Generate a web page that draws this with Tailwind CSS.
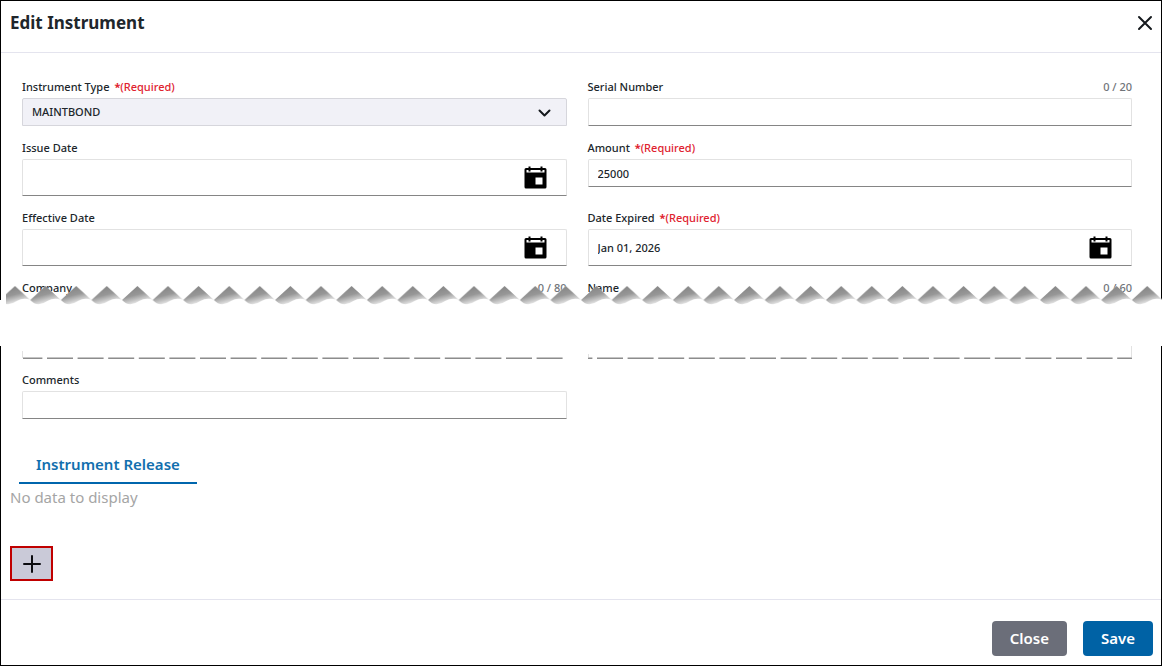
<!DOCTYPE html>
<html lang="en">
<head>
    <meta charset="UTF-8">
    <meta name="viewport" content="width=device-width, initial-scale=1.0">
    <title>Edit Instrument</title>
    <script src="https://cdn.jsdelivr.net/npm/@tailwindcss/browser@4"></script>
</head>
<body class="bg-white font-['Noto_Sans',sans-serif] text-[#20262b]">
    <div class="relative flex min-h-screen flex-col border border-black">
        <!-- Header -->
        <header class="flex h-[52px] items-center justify-between border-b border-[#e4e4ee] pr-2 pl-[9px] pb-[7px]">
            <h1 class="text-[17px] font-bold">Edit Instrument</h1>
            <button type="button" aria-label="Close dialog">
                <svg class="size-4" viewBox="0 0 16 16" fill="none" stroke="#15191d" stroke-width="2" stroke-linecap="round"><path d="M2 2l12 12M14 2L2 14"/></svg>
            </button>
        </header>

        <!-- Form -->
        <main class="grow">
            <form class="grid grid-cols-2 gap-x-[21px] pt-[26px] pr-[29px] pl-[21px] text-[11px] leading-4 font-medium">
                <div class="h-[61px]">
                    <label for="type" class="block">Instrument Type <span class="ml-[2px] text-[#e0222f]"><b>*</b>(Required)</span></label>
                    <div class="relative mt-[3px]">
                        <select id="type" class="h-7 w-full appearance-none rounded-t-xs border border-[#d6d6dc] bg-[#f1f1f7] px-[9px]">
                            <option>MAINTBOND</option>
                        </select>
                        <svg class="pointer-events-none absolute top-[9px] right-[15px] h-3 w-[14px]" viewBox="0 0 14 12" fill="none" stroke="#15191d" stroke-width="2" stroke-linecap="round" stroke-linejoin="round"><path d="M1.500 3.500l5 5 5-5"/></svg>
                    </div>
                </div>
                <div class="h-[61px]">
                    <div class="flex justify-between"><label for="serial">Serial Number</label><span class="text-[#707479]">0 / 20</span></div>
                    <input id="serial" type="text" class="mt-[3px] block h-7 w-full rounded-t-xs border border-[#e2e2e2] border-b-[#858585] px-[9px]">
                </div>

                <div class="h-[70px]">
                    <label for="issue" class="block">Issue Date</label>
                    <div class="relative mt-[3px]">
                        <input id="issue" type="text" class="block h-[37px] w-full rounded-t-xs border border-[#e2e2e2] border-b-[#858585] px-[9px]">
                        <button type="button" aria-label="Pick issue date" class="absolute top-[7px] right-5">
                            <svg class="h-6 w-[23px]" viewBox="0 0 23 24"><path d="M2 2h2.500V.5h2V2h10V.5h2V2h2.500q1.500 0 1.500 1.500V21q0 1.500-1.500 1.500H2Q.5 22.500.5 21V3.500Q.5 2 2 2zM2.500 4v2.500h18V4h-2v1.500h-2V4h-10v1.500h-2V4zM11.500 11.500v7h7v-7z" fill-rule="evenodd"/></svg>
                        </button>
                    </div>
                </div>
                <div class="h-[70px]">
                    <label for="amount" class="block">Amount <span class="ml-[2px] text-[#e0222f]"><b>*</b>(Required)</span></label>
                    <input id="amount" type="text" value="25000" class="mt-[3px] block h-7 w-full rounded-t-xs border border-[#e2e2e2] border-b-[#858585] px-[9px]">
                </div>

                <div class="h-[70px]">
                    <label for="effective" class="block">Effective Date</label>
                    <div class="relative mt-[3px]">
                        <input id="effective" type="text" class="block h-[37px] w-full rounded-t-xs border border-[#e2e2e2] border-b-[#858585] px-[9px]">
                        <button type="button" aria-label="Pick effective date" class="absolute top-[7px] right-5">
                            <svg class="h-6 w-[23px]" viewBox="0 0 23 24"><path d="M2 2h2.500V.5h2V2h10V.5h2V2h2.500q1.500 0 1.500 1.500V21q0 1.500-1.500 1.500H2Q.5 22.500.5 21V3.500Q.5 2 2 2zM2.500 4v2.500h18V4h-2v1.500h-2V4h-10v1.500h-2V4zM11.500 11.500v7h7v-7z" fill-rule="evenodd"/></svg>
                        </button>
                    </div>
                </div>
                <div class="h-[70px]">
                    <label for="expired" class="block">Date Expired <span class="ml-[2px] text-[#e0222f]"><b>*</b>(Required)</span></label>
                    <div class="relative mt-[3px]">
                        <input id="expired" type="text" value="Jan 01, 2026" class="block h-[37px] w-full rounded-t-xs border border-[#e2e2e2] border-b-[#858585] px-[9px]">
                        <button type="button" aria-label="Pick expiry date" class="absolute top-[7px] right-5">
                            <svg class="h-6 w-[23px]" viewBox="0 0 23 24"><path d="M2 2h2.500V.5h2V2h10V.5h2V2h2.500q1.500 0 1.500 1.500V21q0 1.500-1.500 1.500H2Q.5 22.500.5 21V3.500Q.5 2 2 2zM2.500 4v2.500h18V4h-2v1.500h-2V4h-10v1.500h-2V4zM11.500 11.500v7h7v-7z" fill-rule="evenodd"/></svg>
                        </button>
                    </div>
                </div>

                <div class="flex h-[92px] justify-between"><span>Company</span><span class="text-[#707479]">0 / 80</span></div>
                <div class="flex h-[92px] justify-between"><span>Name</span><span class="text-[#707479]">0 / 60</span></div>

                <div>
                    <label for="comments" class="block">Comments</label>
                    <input id="comments" type="text" class="mt-[3px] block h-7 w-full rounded-t-xs border border-[#e2e2e2] border-b-[#858585] px-[9px]">
                </div>
            </form>

            <!-- Page tear -->
            <svg class="absolute -left-px top-[283px] h-[76px] w-[calc(100%+2px)]" viewBox="0 0 1162 76" preserveAspectRatio="none">
                <defs>
                    <linearGradient id="fade" gradientUnits="userSpaceOnUse" x1="13" y1="2" x2="18" y2="21">
                        <stop offset="0" stop-color="#858585"/>
                        <stop offset="0.450" stop-color="#979797"/>
                        <stop offset="1" stop-color="#fff"/>
                    </linearGradient>
                    <pattern id="teeth" x="-0.300" width="30.600" height="30" patternUnits="userSpaceOnUse">
                        <path d="M0 16L15.300 2 30.600 16V30H0z" fill="#fff"/>
                        <path d="M0 16L15.300 2 30.600 16Q24 13 17 17Q7 24 0 16z" fill="url(#fade)"/>
                    </pattern>
                </defs>
                <path d="M0 16h1162v46H0z" fill="#fff"/>
                <path d="M6 0h1156v30H6z" fill="url(#teeth)"/>
                <path d="M22.500 67v7M588.500 70v4M1131.500 62v12" stroke="#e2e2e2"/>
                <path d="M23 73.500h540" stroke="#c4c4c4" stroke-dasharray="26 4.600" stroke-dashoffset="6.600"/>
                <path d="M23 74.500h540" stroke="#8c8c8c" stroke-dasharray="26 4.600" stroke-dashoffset="6.600"/>
                <path d="M588 73.500h544" stroke="#c4c4c4" stroke-dasharray="26 4.600" stroke-dashoffset="21.600"/>
                <path d="M588 74.500h544" stroke="#8c8c8c" stroke-dasharray="26 4.600" stroke-dashoffset="21.600"/>
            </svg>

            <!-- Release tab -->
            <div role="tablist" class="mt-[27px] ml-[18px] flex">
                <button type="button" role="tab" aria-selected="true" class="h-[38px] border-b-2 border-[#0066ad] px-[17px] text-[15px] font-semibold text-[#126fae]">Instrument Release</button>
            </div>
            <p class="mt-px ml-[9px] text-[15px] leading-6 text-[#a5a5a5]">No data to display</p>
            <button type="button" aria-label="Add release" class="mt-[37px] mb-[18px] ml-[9px] flex h-[35px] w-[43px] items-center justify-center border-2 border-[#c00000] bg-[#cacad8]">
                <svg class="size-[18px]" viewBox="0 0 18 18" stroke="#0c0c10" stroke-width="2" stroke-linecap="round"><path d="M9 1v16M1 9h16"/></svg>
            </button>
        </main>

        <!-- Actions -->
        <footer class="flex justify-end gap-4 border-t border-[#e4e4ee] pt-[21px] pr-2 pb-[9px] text-[15px] font-semibold text-white">
            <button type="button" class="h-[35px] rounded bg-[#6b6e79] px-[18px]">Close</button>
            <button type="button" class="h-[35px] rounded bg-[#0062a5] px-[18px]">Save</button>
        </footer>
    </div>
</body>
</html>
